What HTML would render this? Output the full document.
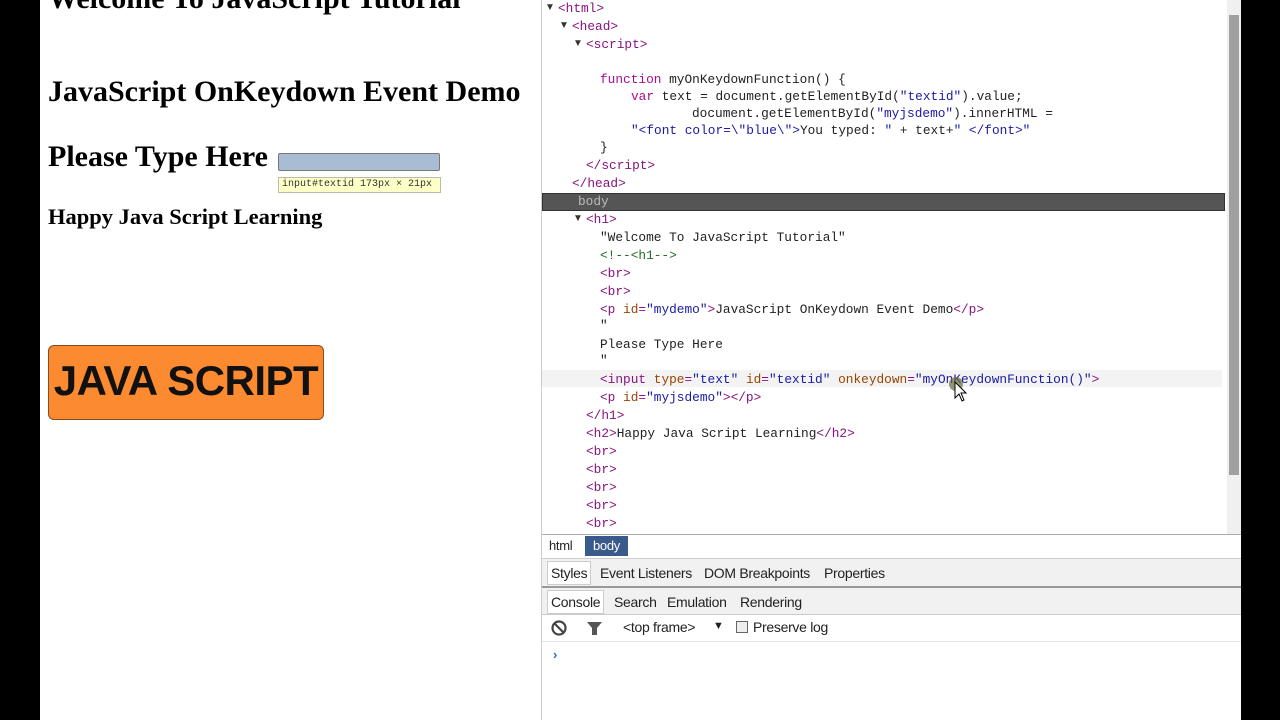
<!DOCTYPE html>
<html><head><style>
body{margin:0;width:1280px;height:720px;position:relative;overflow:hidden;background:#000;font-family:"Liberation Sans",sans-serif}
#page{position:absolute;left:40px;top:0;width:501px;height:720px;background:#fff}
#dev{position:absolute;left:541px;top:0;width:699px;height:720px;background:#fff;border-left:1px solid #ccc}
.h{position:absolute;font-family:"Liberation Serif",serif;font-weight:bold;color:#000;white-space:nowrap}
.c{position:absolute;font-family:"Liberation Mono",monospace;font-size:12.8px;white-space:nowrap;color:#222;line-height:16px}
.t{color:#881280}.a{color:#994500}.v{color:#1a1aa6}.k{color:#aa0d91}
.tri{position:absolute;font-size:10px;color:#333}
.tb{position:absolute;font-size:14px;color:#222;white-space:nowrap;letter-spacing:-0.3px}
</style></head><body>
<div id="page">
<div class="h" style="left:8px;top:-18px;font-size:30px">Welcome To JavaScript Tutorial</div>
<div class="h" style="left:8px;top:75px;font-size:30px">JavaScript OnKeydown Event Demo</div>
<div class="h" style="left:8px;top:140px;font-size:30px">Please Type Here</div>
<div style="position:absolute;left:238px;top:153px;width:160px;height:16px;background:#a8bdd4;border:1px solid #777;border-radius:2px"></div>
<div style="position:absolute;left:238px;top:177px;width:158px;height:14px;background:#ffffc8;border:1px solid #bba;font-family:'Liberation Mono',monospace;font-size:10px;line-height:14px;padding-left:3px;color:#333">input#textid 173px × 21px</div>
<div class="h" style="left:8px;top:204px;font-size:22.5px">Happy Java Script Learning</div>
<div style="position:absolute;left:8px;top:345px;width:274px;height:73px;background:#fb8a30;border:1px solid #8a4a1a;border-radius:6px;font-family:'Liberation Sans',sans-serif;font-weight:bold;font-size:42px;line-height:70px;color:#111;text-align:center;white-space:nowrap;letter-spacing:-0.5px">JAVA SCRIPT</div>
</div>
<div id="dev">
<div style="position:absolute;left:0;top:193px;width:681px;height:16px;background:#555;border:1px solid #333"></div>
<div style="position:absolute;left:0;top:370px;width:680px;height:17px;background:#f3f3f3"></div>
<div style="position:absolute;left:685px;top:0;width:14px;height:534px;background:#f0f0f0"></div>
<div style="position:absolute;left:687px;top:15px;width:10px;height:460px;background:#a0a0a0"></div>
<div class="tri" style="left:3px;top:2px">▼</div><div class="c t" style="left:16px;top:1px">&lt;html&gt;</div>
<div class="tri" style="left:17px;top:20px">▼</div><div class="c t" style="left:30px;top:19px">&lt;head&gt;</div>
<div class="tri" style="left:31px;top:38px">▼</div><div class="c t" style="left:44px;top:37px">&lt;script&gt;</div>
<div class="c" style="left:58px;top:72px"><span class="k">function</span> myOnKeydownFunction() {</div>
<div class="c" style="left:89px;top:89px"><span class="k">var</span> text = document.getElementById(<span class="v">"textid"</span>).value;</div>
<div class="c" style="left:150px;top:106px">document.getElementById(<span class="v">"myjsdemo"</span>).innerHTML =</div>
<div class="c" style="left:89px;top:123px"><span class="v">"&lt;font color=\"blue\"&gt;</span>You typed: <span class="v">"</span> + text+<span class="v">" &lt;/font&gt;"</span></div>
<div class="c" style="left:58px;top:140px">}</div>
<div class="c t" style="left:44px;top:158px">&lt;/script&gt;</div>
<div class="c t" style="left:30px;top:176px">&lt;/head&gt;</div>
<div class="c" style="left:36px;top:194px;color:#bbb">body</div>
<div class="tri" style="left:31px;top:213px">▼</div><div class="c t" style="left:44px;top:212px">&lt;h1&gt;</div>
<div class="c" style="left:58px;top:230px">"Welcome To JavaScript Tutorial"</div>
<div class="c" style="left:58px;top:248px;color:#236e25">&lt;!--&lt;h1--&gt;</div>
<div class="c t" style="left:58px;top:266px">&lt;br&gt;</div>
<div class="c t" style="left:58px;top:284px">&lt;br&gt;</div>
<div class="c" style="left:58px;top:302px"><span class="t">&lt;p </span><span class="a">id</span><span class="t">=</span><span class="v">"mydemo"</span><span class="t">&gt;</span>JavaScript OnKeydown Event Demo<span class="t">&lt;/p&gt;</span></div>
<div class="c" style="left:58px;top:318px">"</div>
<div class="c" style="left:58px;top:337px">Please Type Here</div>
<div class="c" style="left:58px;top:353px">"</div>
<div class="c" style="left:58px;top:372px"><span class="t">&lt;input </span><span class="a">type</span><span class="t">=</span><span class="v">"text"</span> <span class="a">id</span><span class="t">=</span><span class="v">"textid"</span> <span class="a">onkeydown</span><span class="t">=</span><span class="v">"myOnKeydownFunction()"</span><span class="t">&gt;</span></div>
<div class="c" style="left:58px;top:390px"><span class="t">&lt;p </span><span class="a">id</span><span class="t">=</span><span class="v">"myjsdemo"</span><span class="t">&gt;&lt;/p&gt;</span></div>
<div class="c t" style="left:44px;top:408px">&lt;/h1&gt;</div>
<div class="c" style="left:44px;top:426px"><span class="t">&lt;h2&gt;</span>Happy Java Script Learning<span class="t">&lt;/h2&gt;</span></div>
<div class="c t" style="left:44px;top:444px">&lt;br&gt;</div>
<div class="c t" style="left:44px;top:462px">&lt;br&gt;</div>
<div class="c t" style="left:44px;top:480px">&lt;br&gt;</div>
<div class="c t" style="left:44px;top:498px">&lt;br&gt;</div>
<div class="c t" style="left:44px;top:516px">&lt;br&gt;</div>
<svg style="position:absolute;left:406px;top:376px" width="24" height="30"><circle cx="8" cy="8" r="7" fill="#6a6a40" opacity=".7"/><path d="M7 6 L7 22 L11 18 L14 25 L16 24 L13 17 L18 17 Z" fill="#fff" stroke="#000"/></svg>
<div style="position:absolute;left:0;top:534px;width:699px;height:1px;background:#aaa"></div>
<div class="tb" style="left:7px;top:538px;font-size:13px">html</div>
<div class="tb" style="left:43px;top:536px;width:43px;height:20px;background:#3a5a8c;color:#fff;font-size:13px;line-height:20px;text-align:center">body</div>
<div style="position:absolute;left:0;top:558px;width:699px;height:27px;background:#f1f1f1;border-top:1px solid #ccc;border-bottom:2px solid #999"></div>
<div class="tb" style="left:5px;top:561px;height:22px;line-height:22px;padding:0 3px;background:#fff;border:1px solid #ccc">Styles</div>
<div class="tb" style="left:58px;top:562px;line-height:22px">Event Listeners</div>
<div class="tb" style="left:162px;top:562px;line-height:22px">DOM Breakpoints</div>
<div class="tb" style="left:282px;top:562px;line-height:22px">Properties</div>
<div style="position:absolute;left:0;top:588px;width:699px;height:26px;background:#f1f1f1;border-bottom:1px solid #ccc"></div>
<div class="tb" style="left:5px;top:590px;height:22px;line-height:22px;padding:0 3px;background:#fff;border:1px solid #ccc">Console</div>
<div class="tb" style="left:72px;top:591px;line-height:22px">Search</div>
<div class="tb" style="left:125px;top:591px;line-height:22px">Emulation</div>
<div class="tb" style="left:198px;top:591px;line-height:22px">Rendering</div>
<svg style="position:absolute;left:9px;top:620px" width="18" height="18"><circle cx="8" cy="8" r="6.5" fill="none" stroke="#444" stroke-width="2.2"/><path d="M4 4 L12 12" stroke="#444" stroke-width="2.2"/></svg>
<svg style="position:absolute;left:44px;top:620px" width="18" height="18"><path d="M1 2 H16 L11 8 V15 H6 V8 Z" fill="#555"/></svg>
<div class="tb" style="left:81px;top:619px">&lt;top frame&gt;</div>
<div class="tb" style="left:171px;top:620px;font-size:11px">▼</div>
<div style="position:absolute;left:194px;top:621px;width:10px;height:10px;border:1px solid #666;background:#eee"></div>
<div class="tb" style="left:211px;top:619px">Preserve log</div>
<div style="position:absolute;left:0;top:641px;width:699px;height:1px;background:#e4e4e4"></div>
<div class="tb" style="left:11px;top:647px;color:#2a6ad8;font-weight:bold;font-size:13px">›</div>
</div>
</body></html>
